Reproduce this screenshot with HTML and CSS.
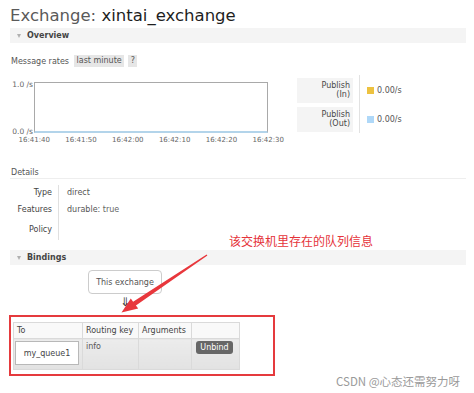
FILE: index.html
```html
<!DOCTYPE html>
<html>
<head>
<meta charset="utf-8">
<link rel="stylesheet" href="styles.css">
</head>
<body>
<div class="page">
  <h1 class="title">Exchange: <b>xintai_exchange</b></h1>
  <div class="bar"><span class="tri"></span>Overview</div>
  <div class="rates"><span class="rates-label">Message rates</span><span class="tag">last minute</span><span class="tag">?</span></div>
  <div class="chart-area">
    <div class="chart-col">
      <div class="chart-row">
        <div class="yaxis"><span>1.0 /s</span><span>0.0 /s</span></div>
        <div class="plot"></div>
      </div>
      <div class="xaxis">
        <span>16:41:40</span><span>16:41:50</span><span>16:42:00</span><span>16:42:10</span><span>16:42:20</span><span>16:42:30</span>
      </div>
    </div>
    <div class="legend">
      <div class="legend-labels">
        <div class="lbl"><span>Publish</span><span>(In)</span></div>
        <div class="lbl"><span>Publish</span><span>(Out)</span></div>
      </div>
      <div class="legend-values">
        <div class="val"><i class="sw sw-in"></i>0.00/s</div>
        <div class="val"><i class="sw sw-out"></i>0.00/s</div>
      </div>
    </div>
  </div>
  <div class="details-head">Details</div>
  <div class="dtable">
    <div class="dl">Type</div><div class="dv">direct</div>
    <div class="dl">Features</div><div class="dv">durable:&nbsp;<span class="true">true</span></div>
    <div class="dl">Policy</div><div class="dv"></div>
  </div>
  <div class="bar bar-bindings"><span class="tri"></span>Bindings</div>
  <div class="this-ex-wrap">
    <div class="this-ex">This exchange</div>
    <div class="darr">&#8659;</div>
  </div>
  <div class="redbox">
    <table class="btable">
      <colgroup><col class="c1"><col class="c2"><col class="c3"><col class="c4"></colgroup>
      <thead>
        <tr><th>To</th><th>Routing key</th><th>Arguments</th><th></th></tr>
      </thead>
      <tbody>
        <tr>
          <td class="td-to"><div class="qbox">my_queue1</div></td>
          <td>info</td>
          <td></td>
          <td class="td-btn"><span class="unbind">Unbind</span></td>
        </tr>
      </tbody>
    </table>
  </div>
</div>
<svg class="arrow" width="474" height="393" viewBox="0 0 474 393">
  <polygon points="206.6,254.4 207.4,255.6 135.9,305.4 138.2,308.6 121.5,312.5 130.8,298.6 133.1,301.8" fill="#e8373c"/>
</svg>
<div class="note">该交换机里存在的队列信息</div>
<div class="wm">CSDN @心态还需努力呀</div>
</body>
</html>
```
FILE: styles.css
```css
* { box-sizing: border-box; }
html, body { margin: 0; padding: 0; background: #fff; }
body {
  font-family: "DejaVu Sans", Verdana, sans-serif;
  font-size: 8px;
  color: #484848;
  position: relative;
  width: 474px;
  height: 393px;
  overflow: hidden;
}
.page { padding: 6px 8px 0 10px; }
.title {
  margin: 0;
  font-size: 16.5px;
  line-height: 20px;
  font-weight: normal;
  color: #5a5a5a;
}
.title b { font-weight: normal; color: #1e1e1e; }
.bar {
  margin-top: 2px;
  height: 15px;
  background: #f4f4f4;
  display: flex;
  align-items: center;
  padding-left: 7px;
  font-weight: bold;
  color: #444;
}
.bar-bindings { margin-top: 10px; }
.tri {
  width: 0; height: 0;
  border-left: 2.5px solid transparent;
  border-right: 2.5px solid transparent;
  border-top: 4px solid #b0b0b0;
  margin-right: 6px;
}
.rates {
  margin-top: 12px;
  height: 12px;
  display: flex;
  align-items: center;
  gap: 4px;
  color: #555;
  padding-left: 1px;
}
.rates-label { margin-right: 1px; }
.tag {
  background: #e6e6e6;
  height: 12px;
  line-height: 12px;
  padding: 0 2.5px;
}
.chart-area { margin-top: 8px; display: flex; }
.chart-col { width: 273px; padding-top: 7px; }
.chart-row { display: flex; align-items: flex-start; height: 51px; }
.yaxis {
  width: 23px;
  height: 55px;
  margin-top: -1px;
  display: flex;
  flex-direction: column;
  justify-content: space-between;
  align-items: flex-end;
  font-size: 7.5px;
  line-height: 8px;
  color: #666;
}
.plot {
  margin-left: 1px;
  width: 234px;
  height: 51px;
  border: 1px solid #a9a9a9;
  border-bottom: 2px solid #b3d4ea;
}
.xaxis {
  margin-top: 3px;
  margin-left: 8.5px;
  width: 265px;
  display: flex;
  justify-content: space-between;
  font-size: 7px;
  line-height: 8px;
  color: #666;
}
.xaxis span { width: 31px; text-align: center; white-space: nowrap; }
.legend { margin-left: 14px; display: flex; }
.legend-labels { padding-top: 3px; display: flex; flex-direction: column; gap: 4px; }
.lbl {
  width: 56px;
  height: 25px;
  background: #f4f4f4;
  display: flex;
  flex-direction: column;
  justify-content: center;
  align-items: flex-end;
  padding-right: 3px;
  line-height: 8.5px;
}
.legend-values {
  margin-left: 6px;
  border-left: 1px solid #e2e2e2;
  height: 58px;
  padding-top: 3px;
  padding-left: 7px;
  display: flex;
  flex-direction: column;
  gap: 4px;
  color: #555;
}
.val { height: 25px; display: flex; align-items: center; gap: 3px; }
.sw { display: block; width: 7px; height: 7px; }
.sw-in { background: #edc240; }
.sw-out { background: #afd8f8; }
.details-head {
  margin-top: 24px;
  line-height: 10px;
  padding-left: 1px;
  color: #555;
  border-bottom: 1px solid #eeeeee;
}
.dtable {
  margin-top: 6px;
  display: grid;
  grid-template-columns: 49px auto;
  grid-template-rows: 15px 18px 22px;
}
.dl {
  display: flex;
  align-items: center;
  justify-content: flex-end;
  padding-right: 6px;
  border-right: 1px solid #e0e0e0;
  color: #444;
}
.dv { display: flex; align-items: center; padding-left: 8px; color: #555; }
.dv .true { color: #666; }
.this-ex-wrap {
  margin-top: 5px;
  margin-left: 78px;
  width: 74px;
  display: flex;
  flex-direction: column;
  align-items: center;
}
.this-ex {
  width: 74px;
  height: 24px;
  border: 1px solid #cccccc;
  border-radius: 4px;
  display: flex;
  align-items: center;
  justify-content: center;
  color: #555;
}
.darr { margin-top: 3px; font-size: 12px; line-height: 11px; color: #333; }
.redbox {
  margin-top: 7px;
  margin-left: -1px;
  width: 266px;
  height: 61px;
  border: 2px solid #e53a3d;
  padding: 5px 0 0 2px;
}
.btable {
  border-collapse: collapse;
  table-layout: fixed;
  width: 226px;
}
.c1 { width: 69px; }
.c2 { width: 56px; }
.c3 { width: 53px; }
.c4 { width: 48px; }
.btable th {
  height: 16px;
  padding: 0 3px;
  font-weight: normal;
  text-align: left;
  vertical-align: middle;
  background: #f9f9f9;
  border: 1px solid #dadada;
  color: #444;
  white-space: nowrap;
}
.btable td {
  height: 31px;
  padding: 3px 3px;
  vertical-align: top;
  background: linear-gradient(#ececec, #e2e2e2);
  border: 1px solid #dadada;
  color: #555;
}
.btable td.td-to { padding: 2px 1px; }
.btable td.td-btn { padding: 2px 4px; }
.qbox {
  width: 64px;
  height: 24px;
  border: 1px solid #b8b8b8;
  background: #fff;
  display: flex;
  align-items: center;
  justify-content: center;
  color: #444;
}
.unbind {
  display: inline-block;
  width: 37px;
  height: 13px;
  line-height: 13px;
  text-align: center;
  background: #676767;
  color: #fff;
  border-radius: 3px;
}
.arrow { position: absolute; left: 0; top: 0; pointer-events: none; }
.note {
  position: absolute;
  left: 229px;
  top: 234px;
  font-family: "Noto Sans CJK SC", sans-serif;
  font-size: 12px;
  line-height: 14px;
  color: #e5333a;
  white-space: nowrap;
}
.wm {
  position: absolute;
  left: 336px;
  top: 374px;
  font-family: "Noto Sans CJK SC", sans-serif;
  font-size: 11.5px;
  line-height: 14px;
  color: #9a9a9a;
  white-space: nowrap;
}
```
